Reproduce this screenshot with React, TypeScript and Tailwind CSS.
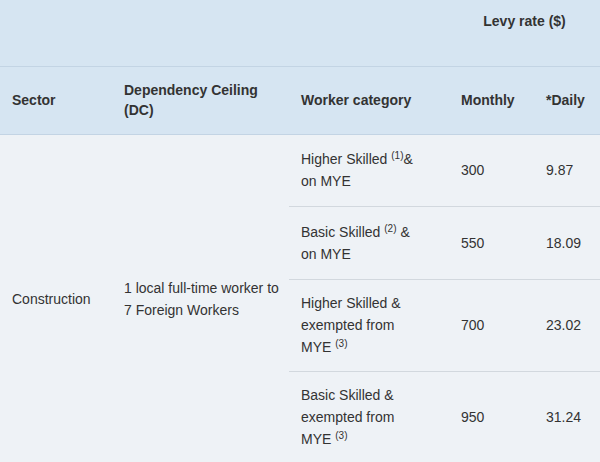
const rows = [
  { cat: <>Higher Skilled <sup className="text-[10px]">(1)</sup>&amp;<br />on MYE</>, m: "300", d: "9.87", h: "h-[72px]" },
  { cat: <>Basic Skilled <sup className="text-[10px]">(2)</sup> &amp;<br />on MYE</>, m: "550", d: "18.09", h: "h-[73px]" },
  { cat: <>Higher Skilled &amp;<br />exempted from<br />MYE <sup className="text-[10px]">(3)</sup></>, m: "700", d: "23.02", h: "h-[92px]" },
  { cat: <>Basic Skilled &amp;<br />exempted from<br />MYE <sup className="text-[10px]">(3)</sup></>, m: "950", d: "31.24", h: "h-[92px]" },
];

export default function App() {
  return (
    <div className="w-[600px] h-[462px] overflow-hidden bg-[#eef2f6] text-[#333] text-[14px] leading-[22px] font-[family-name:Liberation_Sans,Arial,sans-serif]">
      <table className="w-[600px] table-fixed border-collapse">
        <colgroup>
          <col className="w-[112px]" />
          <col className="w-[177px]" />
          <col className="w-[160px]" />
          <col className="w-[85px]" />
          <col className="w-[66px]" />
        </colgroup>
        <thead className="bg-[#d6e5f2] font-bold">
          <tr className="h-[66px] border-b border-[#c3d4e4]">
            <th colSpan={3}></th>
            <th colSpan={2} className="text-center font-bold pb-[24px]">Levy rate ($)</th>
          </tr>
          <tr className="h-[68px] border-b border-[#c3d4e4] text-left">
            <th className="pl-3 font-bold">Sector</th>
            <th className="pl-3 pr-2 font-bold leading-[20px]">Dependency Ceiling (DC)</th>
            <th className="pl-3 font-bold">Worker category</th>
            <th className="pl-3 font-bold">Monthly</th>
            <th className="pl-3 font-bold">*Daily</th>
          </tr>
        </thead>
        <tbody>
          {rows.map((r, i) => (
            <tr key={i} className={r.h}>
              {i === 0 && (
                <>
                  <td rowSpan={4} className="pl-3 align-middle">Construction</td>
                  <td rowSpan={4} className="pl-3 pr-2 align-middle">1 local full-time worker to 7 Foreign Workers</td>
                </>
              )}
              <td className={`pl-3 ${i < 3 ? "border-b border-[#d2d8de]" : ""}`}>{r.cat}</td>
              <td className={`pl-3 ${i < 3 ? "border-b border-[#d2d8de]" : ""}`}>{r.m}</td>
              <td className={`pl-3 ${i < 3 ? "border-b border-[#d2d8de]" : ""}`}>{r.d}</td>
            </tr>
          ))}
        </tbody>
      </table>
    </div>
  );
}
